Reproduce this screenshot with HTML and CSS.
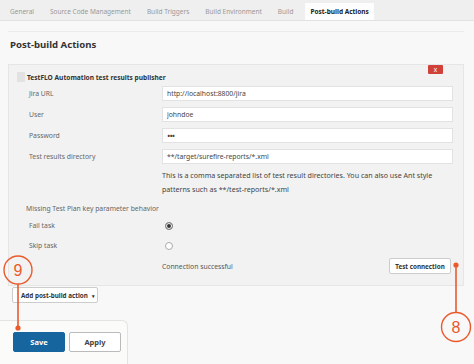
FILE: index.html
```html
<!DOCTYPE html>
<html lang="en">
<head>
    <meta charset="UTF-8">
    <title>Post-build Actions</title>
    <link rel="stylesheet" href="styles.css">
</head>
<body>
    <div class="tabbar">
        <span class="tab">General</span>
        <span class="tab">Source Code Management</span>
        <span class="tab">Build Triggers</span>
        <span class="tab">Build Environment</span>
        <span class="tab">Build</span>
        <span class="tab active">Post-build Actions</span>
    </div>

    <div class="page">
        <div class="rule"></div>
        <h1>Post-build Actions</h1>

        <div class="panel">
            <div class="panel-head">
                <span class="handle"></span>
                <span class="panel-title">TestFLO Automation test results publisher</span>
                <button class="remove">x</button>
            </div>

            <div class="form">
                <label>Jira URL</label>
                <input type="text" value="http://localhost:8800/jira">
                <label>User</label>
                <input type="text" value="johndoe">
                <label>Password</label>
                <input type="password" value="abc">
                <label>Test results directory</label>
                <input type="text" value="**/target/surefire-reports/*.xml">
                <span></span>
                <p class="help">This is a comma separated list of test result directories. You can also use Ant style patterns such as **/test-reports/*.xml</p>
            </div>

            <div class="section-label">Missing Test Plan key parameter behavior</div>

            <div class="form radios">
                <label>Fail task</label>
                <span class="radio checked"></span>
                <label>Skip task</label>
                <span class="radio"></span>
            </div>

            <div class="status-row">
                <span>Connection successful</span>
                <button class="btn test-btn">Test connection</button>
            </div>
        </div>

        <button class="btn add-btn">Add post-build action <span class="caret">&#9662;</span></button>
    </div>

    <div class="bottom-bar">
        <button class="btn save">Save</button>
        <button class="btn apply">Apply</button>
    </div>

    <!-- callouts -->
    <svg class="callouts" width="474" height="364" viewBox="0 0 474 364">
        <circle cx="18" cy="270" r="14" fill="none" stroke="#ea5a2c" stroke-width="1.4"/>
        <text x="18" y="276" text-anchor="middle" class="num">9</text>
        <line x1="18" y1="284" x2="18" y2="327" stroke="#ea5a2c" stroke-width="1.6"/>
        <circle cx="18" cy="328" r="2.6" fill="#ea5a2c"/>

        <circle cx="456" cy="265" r="2.6" fill="#ea5a2c"/>
        <line x1="456" y1="265" x2="456" y2="312" stroke="#ea5a2c" stroke-width="1.6"/>
        <circle cx="456" cy="327" r="14.5" fill="none" stroke="#ea5a2c" stroke-width="1.4"/>
        <text x="456" y="333" text-anchor="middle" class="num">8</text>
    </svg>
</body>
</html>
```

FILE: styles.css
```css
body {
    font-family: "Noto Sans", "Open Sans", sans-serif;
    font-size: 6.8px;
    color: #444;
    background: #f8f8f8;
    margin: 0;
    width: 474px;
    height: 364px;
    position: relative;
    overflow: hidden;
}

.tabbar {
    display: flex;
    align-items: flex-end;
    height: 20px;
    background: #efefef;
    border-bottom: 1px solid #e2e2e2;
    padding-left: 2px;
}

.tab {
    padding: 0 8px;
    height: 17px;
    line-height: 17px;
    font-size: 6.5px;
    color: #999;
}

.tab.active {
    background: #fdfdfd;
    color: #222;
    font-weight: bold;
    margin-left: 4px;
    padding: 0 5px;
}

.page {
    padding: 0 10px 0 8px;
}

.rule {
    margin-top: 10px;
    height: 1px;
    background: #ececec;
}

h1 {
    font-size: 9.6px;
    color: #333;
    margin: 6px 0 0 2px;
    height: 26px;
    line-height: 14px;
}

.panel {
    background: #f2f2f2;
    border: 1px solid #e6e6e6;
    padding-bottom: 11px;
}

.panel-head {
    display: flex;
    align-items: center;
    height: 21px;
}

.handle {
    width: 8px;
    height: 10px;
    background: #e2e2e2;
    margin: 2px 2px 0 8px;
}

.panel-title {
    font-weight: bold;
    font-size: 6.6px;
    color: #333;
    margin-top: 3px;
}

.remove {
    margin-left: auto;
    margin-right: 20px;
    align-self: flex-start;
    margin-top: 0;
    width: 15px;
    height: 9px;
    padding: 0;
    border: none;
    border-radius: 1px;
    background: #d2403a;
    color: #fff;
    font-size: 6.5px;
    line-height: 8px;
    font-family: inherit;
}

.form {
    display: grid;
    grid-template-columns: 133px 291px;
    align-items: center;
    row-gap: 6px;
    padding-left: 20px;
}

.form label {
    color: #666;
}

.form input {
    height: 15px;
    box-sizing: border-box;
    border: 1px solid #e2e2e2;
    background: #fff;
    padding: 0 4px;
    font-family: inherit;
    font-size: 6.8px;
    color: #444;
    margin: 0;
    outline: none;
}

.form input[type=password] {
    font-size: 9px;
    letter-spacing: -1px;
}

.help {
    margin: -2px 0 0;
    line-height: 14px;
    font-size: 7.1px;
    color: #444;
}

.section-label {
    margin: 4px 0 0 17px;
    height: 17px;
    line-height: 17px;
    color: #666;
}

.radios {
    row-gap: 0;
    margin-top: -1px;
}

.radios label {
    height: 20px;
    line-height: 20px;
}

.radio {
    width: 6px;
    height: 6px;
    border-radius: 50%;
    border: 1px solid #aaa;
    background: #fff;
    margin-left: 3px;
}

.radio.checked {
    background: #333;
    box-shadow: inset 0 0 0 1px #fff;
    border-color: #888;
}

.status-row {
    display: flex;
    align-items: center;
    justify-content: space-between;
    padding: 0 12px 0 153px;
    margin-top: 2px;
    height: 16px;
}

.status-row span {
    color: #555;
}

.btn {
    font-family: inherit;
    font-size: 6.3px;
    font-weight: bold;
    color: #333;
    background: #fff;
    border: 1px solid #ccc;
    border-radius: 2px;
    cursor: pointer;
    padding: 0;
    white-space: nowrap;
}

.test-btn {
    width: 62px;
    height: 16px;
}

.add-btn {
    margin: 1px 0 0 4px;
    width: 86px;
    height: 16px;
    text-align: left;
    padding-left: 8px;
}

.caret {
    font-size: 5px;
    margin-left: 2px;
}

.bottom-bar {
    position: absolute;
    left: 0;
    top: 320px;
    width: 128px;
    height: 50px;
    box-sizing: border-box;
    background: #fbfbf9;
    border-top: 1px solid #e4e4e0;
    border-right: 1px solid #e4e4e0;
    border-top-right-radius: 6px;
    display: flex;
    gap: 4px;
    padding: 11px 0 0 13px;
}

.save,
.apply {
    width: 52px;
    height: 20px;
    font-size: 7.5px;
}

.save {
    background: #17659f;
    border-color: #17659f;
    color: #fff;
}

.apply {
    color: #444;
    border-color: #bbb;
}

.callouts {
    position: absolute;
    left: 0;
    top: 0;
    pointer-events: none;
}

.num {
    font-family: "Liberation Sans", sans-serif;
    font-size: 16px;
    fill: #ea5a2c;
}
```
